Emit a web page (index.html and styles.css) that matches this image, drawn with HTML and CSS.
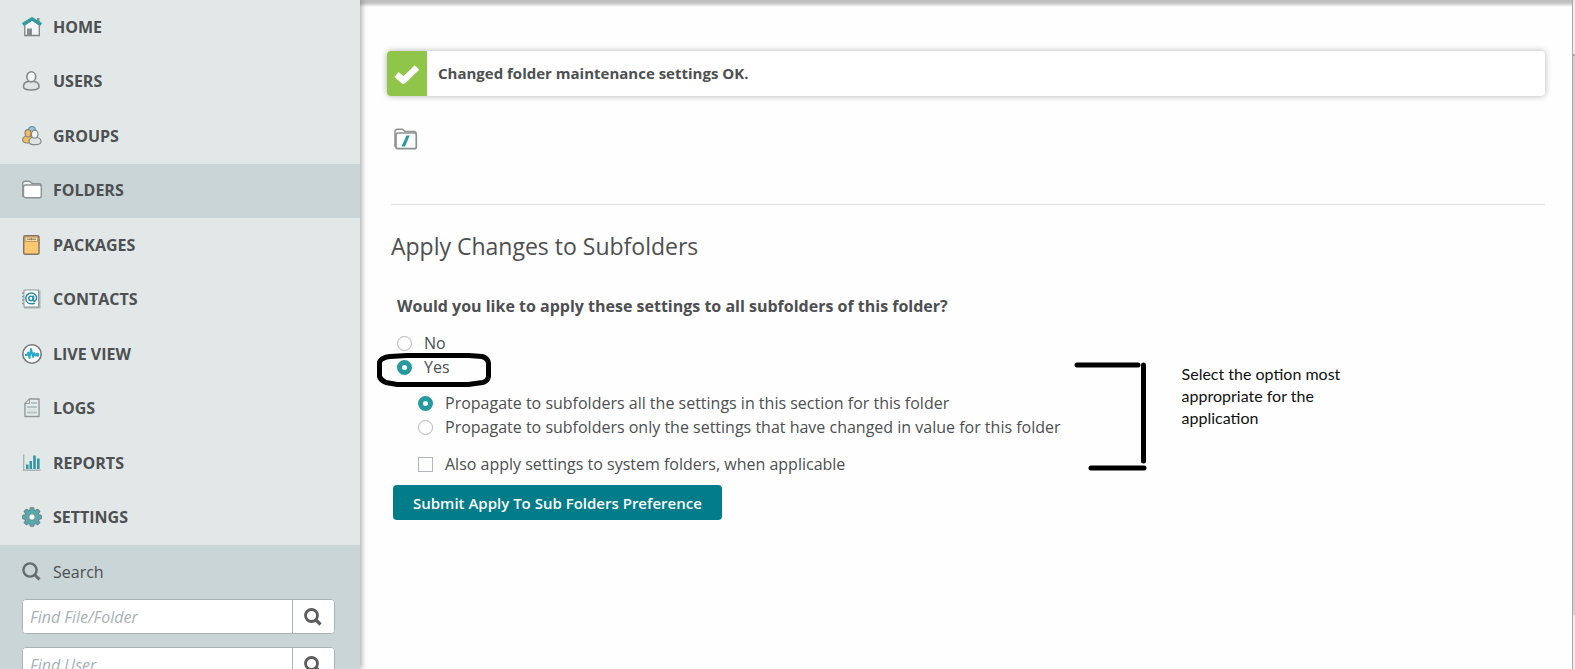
FILE: index.html
```html
<!DOCTYPE html>
<html lang="en">
<head>
    <meta charset="UTF-8">
    <meta name="viewport" content="width=device-width, initial-scale=1.0">
    <title>Apply Changes to Subfolders</title>
    <link rel="stylesheet" href="styles.css">
</head>
<body>
    <aside class="sidebar">
        <nav class="menu">
            <a href="#home">
                <svg width="20" height="20" viewBox="0 0 20 20">
                    <path d="M2.800 8v10.500h14.500V8L10 3z" fill="#f2f5f5" stroke="#7d8487" stroke-width="1.300"/>
                    <path d="M5 11.500h5V18H5z" fill="#868b8d"/>
                    <path d="M15 1h2.500v6H15z" fill="#868b8d"/>
                    <path d="M.7 7.500L10 1.800l9.300 5.700" fill="none" stroke="#2f9aa0" stroke-width="3.200"/>
                </svg>
                Home
            </a>
            <a href="#users">
                <svg width="20" height="20" viewBox="0 0 20 20">
                    <path d="M1.500 15.500c0-3.500 2-4.700 5-5h5.500c3 .3 5 1.500 5 5 0 2.500-2 3.500-7.800 3.500s-7.700-1-7.700-3.500z" fill="#e0e4e4" stroke="#83888a" stroke-width="1.600"/>
                    <ellipse cx="9.300" cy="5.800" rx="4.400" ry="5" fill="#f6f8f8" stroke="#83888a" stroke-width="1.600"/>
                </svg>
                Users
            </a>
            <a href="#groups">
                <svg width="20" height="20" viewBox="0 0 20 20">
                    <circle cx="10" cy="4" r="3.400" fill="#9cc6d4" stroke="#6d99aa" stroke-width="1.200"/>
                    <path d="M.7 14c0-2.500 1.500-3.700 4-4h3c2 .3 3 1.500 3 4 0 2.500-1.500 3-5 3s-5-.5-5-3z" fill="#f2bd62" stroke="#8d8472" stroke-width="1.200"/>
                    <ellipse cx="6" cy="7.300" rx="3" ry="3.700" fill="#f2bd62" stroke="#8d8472" stroke-width="1.200"/>
                    <path d="M7 15.500c0-2.500 1.500-3.700 4-4h3.800c2.700.3 4.200 1.500 4.200 4 0 2.200-1.500 3.200-6 3.200s-6-1-6-3.200z" fill="#dfe4e4" stroke="#83888a" stroke-width="1.200"/>
                    <ellipse cx="12.700" cy="8.200" rx="3.300" ry="4" fill="#f1f4f4" stroke="#83888a" stroke-width="1.200"/>
                </svg>
                Groups
            </a>
            <a href="#folders" class="active">
                <svg width="20" height="20" viewBox="0 0 20 20">
                    <path d="M.8 17V3.500C.8 1.800 1.800 1.200 3 1.200h4c1.500 0 2 2.500 4 2.500h6.500c1 0 1.800.5 1.800 2" fill="#eef2f2" stroke="#8c9294" stroke-width="1.400"/>
                    <rect x="1.500" y="5" width="17.800" height="12.700" rx="2" fill="#fff" stroke="#8c9294" stroke-width="1.400"/>
                </svg>
                Folders
            </a>
            <a href="#packages">
                <svg width="20" height="20" viewBox="0 0 20 20">
                    <rect x="1.700" y=".8" width="15.300" height="18.400" rx="1.500" fill="#fcc76d" stroke="#80776a" stroke-width="1.500"/>
                    <path d="M3 2h12.700v4.500H3z" fill="#fbdca0" stroke="#b08c55" stroke-width=".8"/>
                    <path d="M5 4.200h9M9.300 2.800v2.400" fill="none" stroke="#80776a"/>
                </svg>
                Packages
            </a>
            <a href="#contacts">
                <svg width="20" height="20" viewBox="0 0 20 20">
                    <rect x="2" y="1.500" width="16.500" height="18" fill="#a9b4b7"/>
                    <rect x="2" y="1" width="14.500" height="17" fill="#fff" stroke="#8e999c"/>
                    <path d="M0 4h2M0 7.500h2M0 11h2M0 14.500h2" stroke="#8e999c" stroke-width="1.500"/>
                    <circle cx="9" cy="9.500" r="2.200" fill="none" stroke="#2c8ca6" stroke-width="1.600"/>
                    <path d="M11.500 6.500v4.500c0 2 3 1.300 3-1.700 0-3-2-5.300-5.200-5.300S3.800 6.500 3.800 9.500s2.200 5.300 5.500 5.300c1.500 0 2.700-.3 3.500-.8" fill="none" stroke="#2c8ca6" stroke-width="1.500"/>
                </svg>
                Contacts
            </a>
            <a href="#live">
                <svg width="20" height="20" viewBox="0 0 20 20">
                    <circle cx="10" cy="10" r="9.200" fill="#fff" stroke="#76797c" stroke-width="1.600"/>
                    <path d="M3 11h2l1.300-2.500L7.500 14 9 5l2 8 1-4 1.500 2.500 2-1" fill="none" stroke="#28a9c6" stroke-width="1.900" stroke-linejoin="round"/>
                    <circle cx="15.300" cy="10.700" r="2" fill="#28a9c6"/>
                </svg>
                Live View
            </a>
            <a href="#logs">
                <svg width="20" height="20" viewBox="0 0 20 20">
                    <path d="M7.500 1h9.500v17.500H3V5.500z" fill="#e6ebeb" stroke="#92989a" stroke-width="1.400"/>
                    <path d="M7.500 1v4.500H3z" fill="#f5f7f7" stroke="#92989a"/>
                    <path d="M9 5h6M5 9h10M5 14.500h10" stroke="#b4c3c8" stroke-width="2"/>
                    <path d="M5 11.800h10" stroke="#d0dadd"/>
                </svg>
                Logs
            </a>
            <a href="#reports">
                <svg width="20" height="20" viewBox="0 0 20 20">
                    <path d="M1.700 1.500v15.700h17" fill="none" stroke="#a9b2b5" stroke-width="1.400"/>
                    <path d="M4 11.500h2.500V16H4zM7.500 8H10v8H7.500zM11.200 2.500h2.600V16h-2.600zM15 5.500h2.600V16H15z" fill="#3297a0"/>
                </svg>
                Reports
            </a>
            <a href="#settings">
                <svg width="20" height="20" viewBox="0 0 20 20">
                    <path d="M8.300.7h3.400l.5 2.400 1.200.5 2.100-1.400 2.300 2.300-1.400 2.100.5 1.200 2.400.5v3.400l-2.400.5-.5 1.200 1.400 2.100-2.300 2.300-2.100-1.400-1.200.5-.5 2.400H8.300l-.5-2.400-1.200-.5-2.100 1.400-2.300-2.300 1.400-2.100-.5-1.200L.7 11.700V8.300l2.400-.5.5-1.200-1.400-2.100 2.300-2.300 2.100 1.400 1.200-.5z" fill="#57a9ae" stroke="#66898d" stroke-width="1.100" stroke-linejoin="round"/>
                    <circle cx="10" cy="10" r="3.300" fill="#f2f5f5" stroke="#66898d"/>
                </svg>
                Settings
            </a>
        </nav>
        <section class="search">
            <h2>
                <svg width="20" height="20" viewBox="0 0 20 20">
                    <circle cx="8" cy="8" r="6.600" fill="none" stroke="#666b6d" stroke-width="2.400"/>
                    <path d="M12.700 12.700l4.800 4.800" stroke="#666b6d" stroke-width="3"/>
                </svg>
                Search
            </h2>
            <form class="find">
                <input type="text" placeholder="Find File/Folder" aria-label="Find File/Folder">
                <button type="submit" aria-label="Find File/Folder">
                    <svg width="18" height="18" viewBox="0 0 18 18">
                        <circle cx="7.500" cy="7.500" r="6" fill="none" stroke="#5d5d5d" stroke-width="2.800"/>
                        <path d="M11.500 11.500l5 5" stroke="#5d5d5d" stroke-width="3.200"/>
                    </svg>
                </button>
            </form>
            <form class="find">
                <input type="text" placeholder="Find User" aria-label="Find User">
                <button type="submit" aria-label="Find User">
                    <svg width="18" height="18" viewBox="0 0 18 18">
                        <circle cx="7.500" cy="7.500" r="6" fill="none" stroke="#5d5d5d" stroke-width="2.800"/>
                        <path d="M11.500 11.500l5 5" stroke="#5d5d5d" stroke-width="3.200"/>
                    </svg>
                </button>
            </form>
        </section>
    </aside>
    <main class="content">
        <div class="message">
            <span class="message-icon">
                <svg width="28" height="22" viewBox="0 0 28 22">
                    <path d="M3.500 11.500l7 6L24 4.500" fill="none" stroke="#fff" stroke-width="6.500" stroke-linejoin="round"/>
                </svg>
            </span>
            <p>Changed folder maintenance settings OK.</p>
        </div>
        <a class="path" href="#root" aria-label="Root folder">
            <svg width="24" height="22" viewBox="0 0 24 22">
                <path d="M1 19V3.500C1 2 2 1.200 3.500 1.200h4.500c1.500 0 2 2.300 4 2.300h7.500c1.500 0 2.700.7 2.700 2.500" fill="#fff" stroke="#8c9294" stroke-width="1.500"/>
                <rect x="2" y="5" width="20.300" height="15.700" rx="2" fill="#fff" stroke="#8c9294" stroke-width="1.700"/>
                <path d="M12.500 7.500h3.200L11 18.500H7.500z" fill="#2d9a9f"/>
            </svg>
        </a>
        <h1>Apply Changes to Subfolders</h1>
        <form class="apply">
            <fieldset>
                <legend>Would you like to apply these settings to all subfolders of this folder?</legend>
                <div class="row">
                    <div class="options">
                        <label><input type="radio" name="apply"> No</label>
                        <label class="circled">
                            <input type="radio" name="apply" checked> Yes
                            <svg class="circle" width="114" height="34" viewBox="0 0 114 34">
                                <path d="M13 3.500L30 2.500h62l13 1q6 1.500 6.500 7v13q-1 5-6 6l-14 2H20l-11-2q-5-2-6.500-6V9q2-4.500 10.500-5.500z" fill="none" stroke="#000" stroke-width="5"/>
                            </svg>
                        </label>
                        <div class="suboptions">
                            <label><input type="radio" name="propagate" checked> Propagate to subfolders all the settings in this section for this folder</label>
                            <label><input type="radio" name="propagate"> Propagate to subfolders only the settings that have changed in value for this folder</label>
                            <label class="system"><input type="checkbox"> Also apply settings to system folders, when applicable</label>
                        </div>
                    </div>
                    <div class="note">
                        <svg width="73" height="110" viewBox="0 0 73 110">
                            <path d="M3 4h61M69.500 4v96M17 107h53" fill="none" stroke="#000" stroke-width="5" stroke-linecap="round"/>
                        </svg>
                        <p>Select the option most appropriate for the application</p>
                    </div>
                </div>
            </fieldset>
            <button type="submit">Submit Apply To Sub Folders Preference</button>
        </form>
    </main>
    <div class="scroll-edge"></div>
</body>
</html>
```
FILE: styles.css
```css
* {
    box-sizing: border-box;
}
body {
    display: flex;
    height: 100vh;
    margin: 0;
    overflow: hidden;
    font-family: "Open Sans", sans-serif;
    font-size: 16px;
    line-height: 24px;
    color: #4d4f51;
    background-color: #fefefe;
}
svg {
    flex: none;
}

/* Sidebar */
.sidebar {
    display: flex;
    flex-direction: column;
    flex: none;
    width: 360px;
    background-color: #e1e8e7;
    box-shadow: 1px 0 6px rgba(0, 0, 0, 0.4);
    z-index: 2;
}
.menu {
    display: grid;
    grid-auto-rows: 1fr;
    flex: none;
    min-height: 545px;
}
.menu a {
    display: flex;
    align-items: center;
    gap: 11px;
    padding: 0 22px 1px;
    font-weight: 700;
    text-transform: uppercase;
    text-decoration: none;
    color: inherit;
}
.menu a.active {
    background-color: #c9d5d7;
}
.search {
    flex: 1 0 auto;
    padding: 0 25px 0 22px;
    background-color: #c9d5d7;
}
.search h2 {
    display: flex;
    align-items: center;
    gap: 11px;
    height: 54px;
    margin: 0;
    font-size: 16px;
    font-weight: 500;
}
.find {
    display: flex;
    height: 35px;
    margin-bottom: 13px;
    border: 1px solid #a9b2b6;
    border-radius: 4px;
    background-color: #fff;
    overflow: hidden;
}
.find input {
    flex: 1;
    min-width: 0;
    padding: 0 7px;
    border: 0;
    font: italic 16px "Open Sans", sans-serif;
}
.find input::placeholder {
    color: #a9b2b6;
}
.find button {
    display: flex;
    align-items: center;
    justify-content: center;
    width: 42px;
    padding: 0 2px 0 0;
    border: 0;
    border-left: 1px solid #a9b2b6;
    background-color: #fff;
    cursor: pointer;
}

/* Content */
.content {
    flex: 1;
    min-width: 0;
    padding: 51px 27px 0;
    background: linear-gradient(#bbb, #c4c4c4 3px, #fefefe 7px);
}
.message {
    display: flex;
    height: 45px;
    border-radius: 4px;
    background-color: #fff;
    box-shadow: 0 0 6px rgba(0, 0, 0, 0.3);
}
.message-icon {
    display: flex;
    align-items: center;
    justify-content: center;
    width: 40px;
    border-radius: 4px 0 0 4px;
    background-color: #8fc549;
}
.message p {
    margin: 0;
    padding: 10px 11px;
    font-size: 15px;
    font-weight: 700;
}
.path {
    display: block;
    height: 109px;
    margin-left: 4px;
    padding: 32px 3px 0;
    border-bottom: 1px solid #e0e2e3;
}
h1 {
    margin: 24px 0 31px 4px;
    font-size: 23px;
    font-weight: 500;
    line-height: 34px;
}
fieldset {
    margin: 0;
    padding: 0 0 0 10px;
    border: 0;
}
legend {
    padding: 0;
    margin-bottom: 13px;
    font-weight: 700;
}
.row {
    display: flex;
    align-items: flex-start;
}
.options label {
    display: flex;
    align-items: center;
    gap: 12px;
    position: relative;
}
.options input {
    appearance: none;
    flex: none;
    width: 15px;
    height: 15px;
    margin: 0;
    border: 1px solid #b3b5bd;
    background-color: #fff;
}
.options input[type="radio"] {
    border-radius: 50%;
}
.options input[type="radio"]:checked {
    border: 5px solid #269a9f;
}
.circle {
    position: absolute;
    top: -2px;
    left: -20px;
}
.suboptions {
    margin: 12px 0 9px 21px;
}
.suboptions .system {
    margin-top: 13px;
}
.note {
    display: flex;
    gap: 35px;
    margin: 30px 0 0 13px;
}
.note p {
    width: 180px;
    margin: 2px 0 0;
    font-family: Lato, sans-serif;
    font-size: 16px;
    line-height: 22px;
    color: #111;
}
.apply > button {
    height: 35px;
    margin-left: 6px;
    padding: 0 20px;
    border: 0;
    border-radius: 4px;
    font: 600 15px "Open Sans", sans-serif;
    color: #fff;
    background-color: #007d89;
    cursor: pointer;
}

/* Right edge of the window */
.scroll-edge {
    flex: none;
    width: 3px;
    border-left: 1px solid #aaa;
    background: linear-gradient(#eee 54px, #aaa 54px, #aaa 56px, #d0d0d0 56px, #d0d0d0 92%, #eee 92%);
}
```
